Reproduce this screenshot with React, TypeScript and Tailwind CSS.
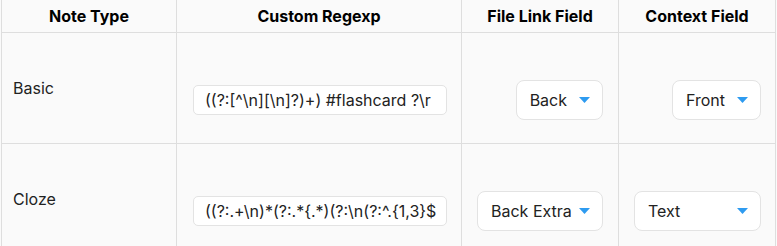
import React from "react";

const Arrow = () => (
  <svg width="11" height="6" viewBox="0 0 11 6" className="shrink-0">
    <path d="M0 0 L11 0 L5.5 6 Z" fill="#2e9bf0" />
  </svg>
);

const Select = ({ label, full }: { label: string; full?: boolean }) => (
  <div
    className={`flex h-[40px] items-center rounded-[8px] border border-[#e3e3e3] bg-white pl-[13px] pr-[12px] text-[16px] text-[#222] ${
      full ? "w-full justify-between" : "gap-3"
    }`}
  >
    <span>{label}</span>
    <Arrow />
  </div>
);

const Input = ({ value }: { value: string }) => (
  <div className="flex h-[30px] w-[254px] items-center overflow-hidden whitespace-nowrap rounded-[5px] border border-[#e3e3e3] bg-white pl-[11px] text-[16px] text-[#222]">
    {value}
  </div>
);

export default function App() {
  const head = "flex h-[32px] items-center justify-center border-l border-[#dedede] font-bold text-[16px] text-black";
  const cell = "flex h-[110px] items-center border-l border-[#dedede]";
  return (
    <div
      className="min-h-screen bg-[#fafafa]"
      style={{ fontFamily: "Inter, 'Noto Sans', sans-serif" }}
    >
      <div className="ml-px grid w-[775px] grid-cols-[175px_285px_157px_158px]">
        <div className={head}>Note Type</div>
        <div className={head}>Custom Regexp</div>
        <div className={head}>File Link Field</div>
        <div className={`${head} border-r`}>Context Field</div>

        <div className="col-span-4 h-px bg-[#dedede]" />

        <div className={`${cell} pl-[11px] text-[16px] text-[#222]`}>Basic</div>
        <div className={`${cell} pl-[16px] pt-6`}>
          <Input value={"((?:[^\\n][\\n]?)+) #flashcard ?\\r"} />
        </div>
        <div className={`${cell} justify-end pr-[15px] pt-6`}>
          <Select label="Back" />
        </div>
        <div className={`${cell} justify-end border-r pr-[14px] pt-6`}>
          <Select label="Front" />
        </div>

        <div className="col-span-4 h-px bg-[#dedede]" />

        <div className={`${cell} pl-[11px] text-[16px] text-[#222]`}>Cloze</div>
        <div className={`${cell} pl-[16px] pt-6`}>
          <Input value={"((?:.+\\n)*(?:.*{.*)(?:\\n(?:^.{1,3}$"} />
        </div>
        <div className={`${cell} px-[15px] pt-6`}>
          <Select label="Back Extra" full />
        </div>
        <div className={`${cell} border-r pl-[15px] pr-[14px] pt-6`}>
          <Select label="Text" full />
        </div>
      </div>
    </div>
  );
}
